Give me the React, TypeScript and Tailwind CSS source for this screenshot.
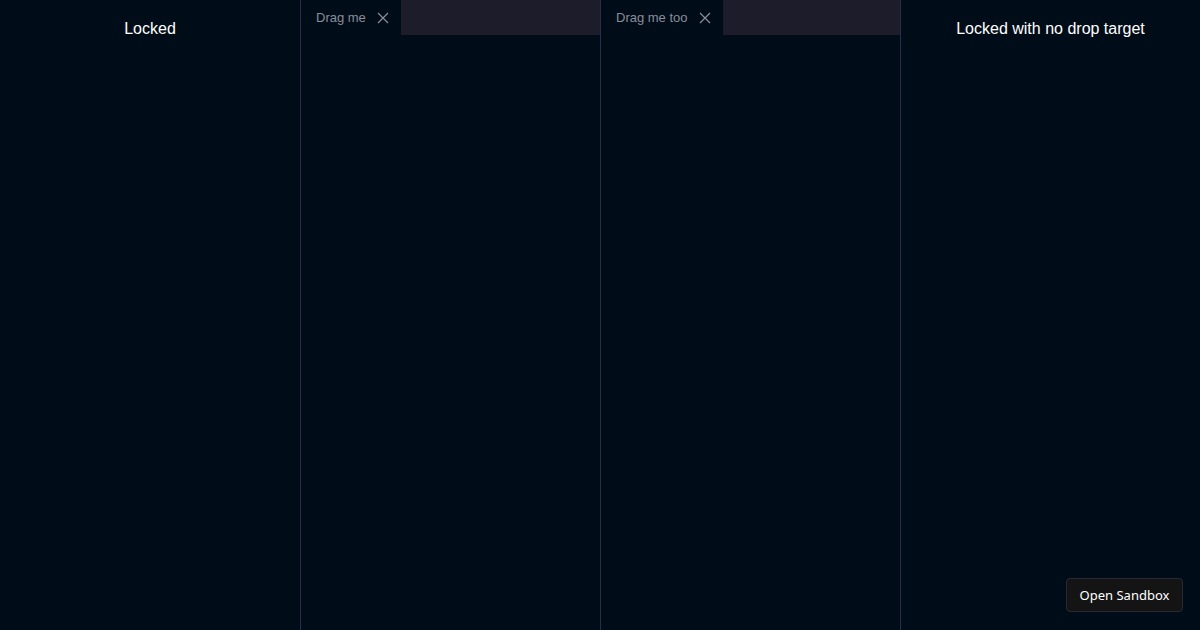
import React from "react";

function CloseIcon() {
  return (
    <svg width="12" height="12" viewBox="0 0 12 12" className="block">
      <path d="M1 1 L11 11 M11 1 L1 11" stroke="#8c8f9b" strokeWidth="1.2" fill="none" />
    </svg>
  );
}

function TabPanel({ title }: { title: string }) {
  return (
    <div className="flex flex-col w-[300px] h-full border-l border-[#2b2b4a] bg-[#000c18]">
      <div className="flex h-[35px] bg-[#1c1c2a] shrink-0">
        <div className="flex items-center h-full bg-[#000c18] pl-[15px] pr-[12px] gap-[11px] text-[13px] text-[#8a8d99]">
          <span>{title}</span>
          <CloseIcon />
        </div>
      </div>
      <div className="flex-1" />
    </div>
  );
}

function LockedPanel({ title, border }: { title: string; border?: boolean }) {
  return (
    <div className={`flex flex-col w-[300px] h-full bg-[#000c18] ${border ? "border-l border-[#2b2b4a]" : ""}`}>
      <div className="text-center text-white text-[16px] pt-[19px] leading-[20px]">{title}</div>
    </div>
  );
}

export default function App() {
  return (
    <div
      className="relative w-[1200px] h-[630px] bg-[#000c18] flex overflow-hidden"
      style={{ fontFamily: '"Liberation Sans", Arial, sans-serif' }}
    >
      <LockedPanel title="Locked" />
      <TabPanel title="Drag me" />
      <TabPanel title="Drag me too" />
      <LockedPanel title="Locked with no drop target" border />
      <button
        className="absolute right-[17px] bottom-[18px] w-[117px] h-[34px] pt-[2px] rounded-[4px] border border-[#2a2a36] bg-[#141414] text-white text-[13px]"
        style={{ fontFamily: '"Noto Sans", "Open Sans", sans-serif' }}
      >
        Open Sandbox
      </button>
    </div>
  );
}
